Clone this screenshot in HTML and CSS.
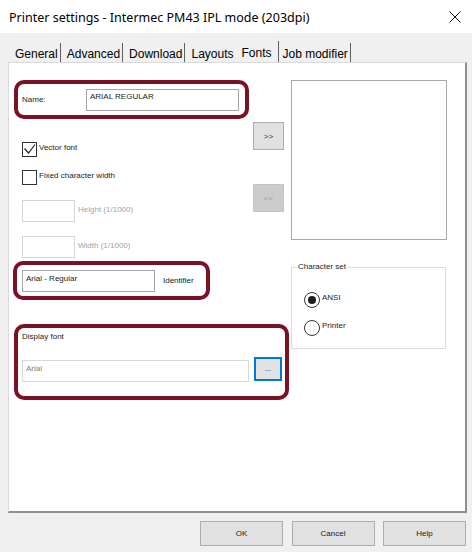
FILE: index.html
```html
<!DOCTYPE html>
<html>
<head>
<meta charset="utf-8">
<title>Printer settings</title>
<link rel="stylesheet" href="styles.css">
</head>
<body>
<div class="window">
  <div class="titlebar">
    <span class="title">Printer settings - Intermec PM43 IPL mode (203dpi)</span>
    <svg class="close" viewBox="0 0 12 12"><path d="M0.5 0.5L11.5 11.5M11.5 0.5L0.5 11.5" stroke="#111" stroke-width="1" fill="none"/></svg>
  </div>
  <div class="tabs">
    <span class="tab">General</span>
    <span class="tab">Advanced</span>
    <span class="tab">Download</span>
    <span class="tab noline">Layouts</span>
    <span class="tab active">Fonts</span>
    <span class="tab last">Job modifier</span>
  </div>
  <div class="panel">
    <div class="left">
      <div class="hl hl-name">
        <span class="lbl name-lbl">Name:</span>
        <div class="edit name-edit">ARIAL REGULAR</div>
      </div>
      <div class="mid">
        <div class="opts">
          <div class="check check1">
            <span class="box"><svg viewBox="0 0 13 13"><path d="M1.5 5.5L5.5 10L12 1.5" stroke="#222" stroke-width="1.2" fill="none"/></svg></span>
            <span class="ctext">Vector font</span>
          </div>
          <div class="check check2">
            <span class="box"></span>
            <span class="ctext">Fixed character width</span>
          </div>
          <div class="dim dim1">
            <div class="edit small"></div>
            <span class="dimlbl">Height (1/1000)</span>
          </div>
          <div class="dim dim2">
            <div class="edit small"></div>
            <span class="dimlbl">Width (1/1000)</span>
          </div>
        </div>
        <div class="movers">
          <div class="btn mv mv1">&gt;&gt;</div>
          <div class="btn mv mv2 disabled">&lt;&lt;</div>
        </div>
      </div>
      <div class="hl hl-id">
        <div class="edit id-edit">Arial - Regular</div>
        <span class="lbl id-lbl">Identifier</span>
      </div>
      <div class="hl hl-disp">
        <div class="lbl disp-lbl">Display font</div>
        <div class="disp-row">
          <div class="edit disp-edit">Arial</div>
          <div class="btn dots">...</div>
        </div>
      </div>
    </div>
    <div class="right">
      <div class="listbox"></div>
      <fieldset class="group">
        <legend>Character set</legend>
        <div class="radio-row r1"><span class="radio on"><span class="dot"></span></span><span class="rtext">ANSI</span></div>
        <div class="radio-row r2"><span class="radio"></span><span class="rtext">Printer</span></div>
      </fieldset>
    </div>
  </div>
  <div class="footer">
    <div class="pbtn">OK</div>
    <div class="pbtn">Cancel</div>
    <div class="pbtn">Help</div>
  </div>
</div>
</body>
</html>
```

FILE: styles.css
```css
* { box-sizing: border-box; }
html, body { margin: 0; padding: 0; }
body {
  width: 474px;
  height: 555px;
  background: #ffffff;
  font-family: "Liberation Sans", Arial, sans-serif;
  font-size: 8px;
  color: #1b1b1b;
  overflow: hidden;
}
.window {
  width: 472px;
  height: 552px;
  background: #f0f0f0;
  display: flex;
  flex-direction: column;
}
.titlebar {
  height: 33px;
  flex: none;
  background: #ffffff;
  display: flex;
  align-items: center;
  justify-content: space-between;
  padding: 1px 11px 0 9px;
}
.title {
  font-family: "Noto Sans", "Open Sans", sans-serif;
  font-size: 12.5px;
  color: #000;
}
.close { width: 12px; height: 12px; display: block; }

.tabs {
  height: 29px;
  flex: none;
  display: flex;
  align-items: flex-end;
  padding-left: 9px;
  font-size: 12px;
  color: #000;
}
.tab {
  height: 19px;
  line-height: 14px;
  padding: 4px 2px 1px 6px;
  border-right: 1px solid #5f5f5f;
  white-space: nowrap;
}
.tab.noline { border-right: none; }
.tab.active { height: 21px; padding: 5px 6px 2px 6px; }
.tab.last { padding-left: 4px; }

.panel {
  flex: none;
  height: 451px;
  width: 459px;
  margin-left: 8px;
  background: #ffffff;
  border-left: 1px solid #dadada;
  border-top: 1px solid #dadada;
  border-right: 2px solid #8f8f8f;
  border-bottom: 2px solid #8f8f8f;
  display: flex;
  padding-left: 4px;
}
.left { width: 276px; display: flex; flex-direction: column; }
.right { width: 156px; margin-left: 2px; display: flex; flex-direction: column; }

.hl {
  border: 4px solid #7a1226;
  border-radius: 10px;
}
.lbl { line-height: 10px; white-space: nowrap; }
.edit {
  height: 22px;
  border: 1px solid #a5a5a5;
  background: #fff;
  padding: 2px 3px;
  line-height: 10px;
  white-space: nowrap;
}

.hl-name {
  margin-top: 17px;
  margin-left: 1px;
  width: 235px;
  height: 39px;
  display: flex;
  align-items: center;
  padding-left: 4px;
}
.name-lbl { width: 64px; }
.name-edit { width: 153px; }

.mid { height: 142px; display: flex; }
.opts { width: 240px; padding-left: 9px; display: flex; flex-direction: column; }
.check { display: flex; align-items: flex-start; height: 15px; }
.check1 { margin-top: 23px; }
.check2 { margin-top: 13px; }
.box {
  width: 15px;
  height: 15px;
  border: 1px solid #333;
  background: #fff;
  margin-right: 2px;
  flex: none;
}
.box svg { width: 13px; height: 13px; display: block; }
.ctext { line-height: 10px; padding-top: 1px; white-space: nowrap; }
.dim { display: flex; align-items: center; height: 22px; }
.dim1 { margin-top: 15px; }
.dim2 { margin-top: 14px; }
.edit.small { width: 53px; border-color: #d6d6d6; }
.dimlbl { margin-left: 3px; color: #a3a3a3; line-height: 10px; margin-top: -3px; }

.movers { display: flex; flex-direction: column; }
.btn {
  background: #e1e1e1;
  border: 1px solid #adadad;
  display: flex;
  align-items: center;
  justify-content: center;
  color: #333;
}
.mv { width: 31px; height: 28px; }
.mv1 { margin-top: 3px; }
.mv2 { margin-top: 34px; }
.btn.disabled { background: #cccccc; border-color: #c4c4c4; color: #a0a0a0; }

.hl-id {
  width: 197px;
  height: 39px;
  display: flex;
  align-items: center;
  padding-left: 5px;
}
.id-edit { width: 133px; padding-top: 3px; }
.id-lbl { margin-left: 8px; }

.hl-disp {
  margin-top: 24px;
  margin-left: 1px;
  width: 275px;
  height: 76px;
  padding: 4px 0 0 4px;
}
.disp-row { display: flex; align-items: flex-start; margin-top: 15px; }
.disp-edit { width: 227px; margin-top: 3px; border-color: #d9d9d9; color: #7d7d7d; padding-top: 3px; }
.dots { width: 28px; height: 24px; margin-left: 5px; border: 2px solid #0078d7; line-height: 8px; }

.listbox {
  margin-top: 17px;
  width: 156px;
  height: 160px;
  border: 1px solid #a8a8a8;
  background: #fff;
}
.group {
  margin: 22px 0 0 0;
  width: 155px;
  min-inline-size: 0;
  border: 1px solid #dcdcdc;
  padding: 20px 0 13px 12px;
}
.group legend {
  margin-left: -7px;
  padding: 0 1px;
  line-height: 10px;
  font-size: 8px;
}
.radio-row { display: flex; align-items: center; height: 15px; }
.r2 { margin-top: 13px; }
.radio {
  width: 16px;
  height: 16px;
  border: 1px solid #333;
  border-radius: 50%;
  background: #fff;
  margin-right: 2px;
  display: flex;
  align-items: center;
  justify-content: center;
  flex: none;
}
.dot { width: 8px; height: 8px; border-radius: 50%; background: #1e1e1e; }
.rtext { line-height: 10px; margin-top: -3px; }

.footer {
  flex: none;
  display: flex;
  justify-content: flex-end;
  gap: 8.5px;
  padding: 8px 6px 0 0;
}
.pbtn {
  width: 83px;
  height: 25px;
  background: #e1e1e1;
  border: 1px solid #adadad;
  display: flex;
  align-items: center;
  justify-content: center;
  color: #1b1b1b;
}
```
